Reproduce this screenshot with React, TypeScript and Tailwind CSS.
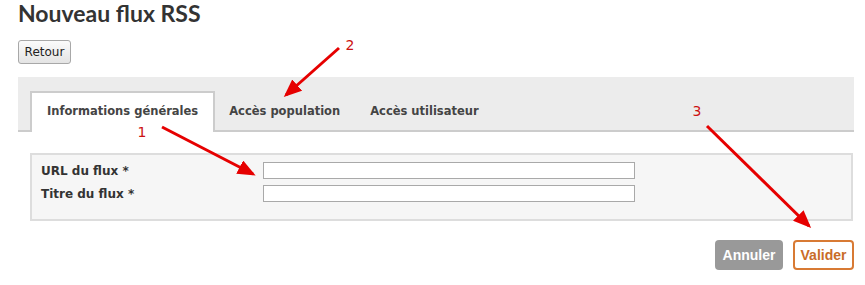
import React from "react";

export default function App() {
  return (
    <div className="relative w-[865px] h-[285px] bg-white overflow-hidden">
      <div className="pl-[18px] w-[854px]">
        <h1 className="m-0 text-[23px] leading-[26px] text-[#333] font-bold" style={{ fontFamily: "Lato, sans-serif" }}>
          Nouveau flux RSS
        </h1>
        <div className="mt-[14px]">
          <button
            className="h-[24px] w-[53px] rounded-[3px] border border-[#a8a8a8] bg-gradient-to-b from-[#fbfbfb] to-[#e4e4e4] text-[12px] text-[#222] flex items-center justify-center"
            style={{ fontFamily: '"DejaVu Sans", sans-serif' }}
          >
            Retour
          </button>
        </div>

        <div className="mt-[13px] h-[55px] bg-[#ececec] border-b-[2px] border-[#cccccc] flex items-end pl-[12px]">
          <div
            className="flex items-stretch h-[41px] -mb-[2px] text-[11.5px] font-bold text-[#444]"
            style={{ fontFamily: '"DejaVu Sans", sans-serif' }}
          >
            <div className="bg-white border-2 border-b-0 border-[#cccccc] pl-[15px] pr-[15px] flex items-center pb-[2px]">
              Informations générales
            </div>
            <div className="border-2 border-transparent border-b-0 pl-[12px] pr-[13px] flex items-center pb-[2px]">
              Accès population
            </div>
            <div className="border-2 border-transparent border-b-0 px-[13px] flex items-center pb-[2px]">
              Accès utilisateur
            </div>
          </div>
        </div>

        <div className="mt-[21px] ml-[12px] mr-[1px] h-[68px] bg-[#f6f6f6] border-2 border-[#dddddd] pt-[7px] pl-[9px]">
          <div
            className="flex flex-col gap-[6px] text-[12px] font-bold text-[#333]"
            style={{ fontFamily: '"DejaVu Sans", sans-serif' }}
          >
            <div className="flex items-center h-[17px]">
              <label className="w-[222px]">URL du flux *</label>
              <input className="h-[17px] w-[372px] border border-[#a9a9a9] bg-white" />
            </div>
            <div className="flex items-center h-[17px]">
              <label className="w-[222px]">Titre du flux *</label>
              <input className="h-[17px] w-[372px] border border-[#a9a9a9] bg-white" />
            </div>
          </div>
        </div>

        <div
          className="mt-[19px] flex justify-end gap-[10px] text-[14px] font-bold"
          style={{ fontFamily: '"Liberation Sans", Arial, sans-serif' }}
        >
          <button className="h-[30px] w-[68px] rounded-[4px] bg-[#999999] text-white flex items-center justify-center">
            Annuler
          </button>
          <button className="h-[30px] w-[61px] rounded-[4px] border-2 border-[#d87a34] bg-white text-[#c96c28] flex items-center justify-center">
            Valider
          </button>
        </div>
      </div>

      {/* annotations */}
      <svg className="absolute left-0 top-0 pointer-events-none" width="865" height="285" viewBox="0 0 865 285">
        <defs>
          <marker id="ah" markerWidth="6" markerHeight="5" refX="5" refY="2.5" orient="auto" markerUnits="strokeWidth">
            <path d="M0,0 L6,2.5 L0,5 Z" fill="#e60000" />
          </marker>
        </defs>
        <line x1="339" y1="48" x2="286" y2="95" stroke="#e60000" strokeWidth="3" markerEnd="url(#ah)" />
        <line x1="162" y1="127" x2="253" y2="174" stroke="#e60000" strokeWidth="3" markerEnd="url(#ah)" />
        <line x1="707" y1="126" x2="809" y2="226" stroke="#e60000" strokeWidth="3" markerEnd="url(#ah)" />
        <text x="350" y="50" fill="#cc1111" fontSize="14" textAnchor="middle" fontFamily="DejaVu Sans, sans-serif">2</text>
        <text x="142" y="137" fill="#cc1111" fontSize="14" textAnchor="middle" fontFamily="DejaVu Sans, sans-serif">1</text>
        <text x="697" y="116" fill="#cc1111" fontSize="14" textAnchor="middle" fontFamily="DejaVu Sans, sans-serif">3</text>
      </svg>
    </div>
  );
}
